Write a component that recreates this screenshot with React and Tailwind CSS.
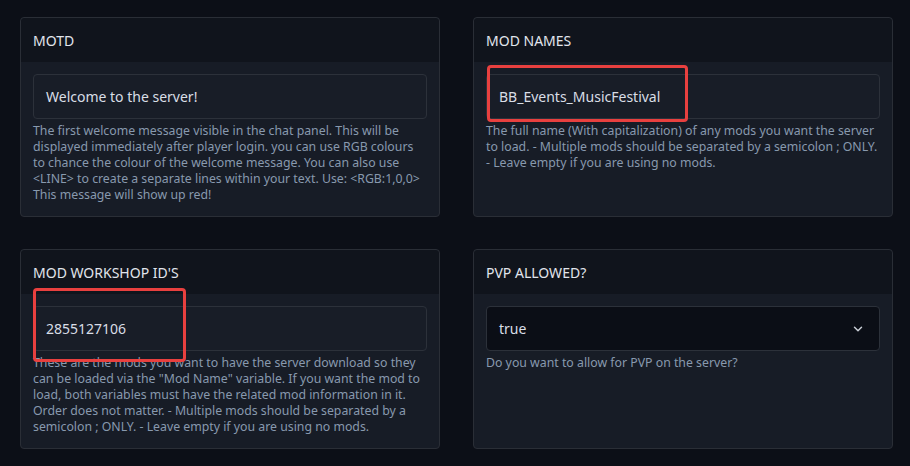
import { ChevronDown } from "lucide-react";

const font = { fontFamily: '"Noto Sans", "Open Sans", sans-serif' };

function Card({ title, children, highlight }) {
  return (
    <div className="relative h-[200px] rounded-[4px] border border-[#2a2e36] bg-[#171c26]">
      <div className="h-[44px] flex items-center px-[12px] bg-[#10141c] rounded-t-[4px] text-[14px] font-normal text-[#e1e5ec]">
        {title}
      </div>
      <div className="px-[12px] pt-[12px]">{children}</div>
      {highlight}
    </div>
  );
}

function TextField({ value }) {
  return (
    <div className="h-[45px] flex items-center px-[12px] rounded-[4px] border border-[#2c313a] bg-[#181d27] text-[14px] text-[#d9dee6]">
      {value}
    </div>
  );
}

function Help({ children }) {
  return <p className="mt-[4px] text-[12.3px] leading-[16px] text-[#8899ae]">{children}</p>;
}

export default function App() {
  return (
    <div className="min-h-screen w-[910px] bg-[#0c0f17] pt-[17px] pl-[20px] pr-[17px]" style={font}>
      <div className="grid grid-cols-2 gap-x-[33px] gap-y-[32px]">
        <Card title="MOTD">
          <TextField value="Welcome to the server!" />
          <Help>
            The first welcome message visible in the chat panel. This will be displayed immediately after player login. you can use RGB colours to chance the colour of the welcome message. You can also use &lt;LINE&gt; to create a separate lines within your text. Use: &lt;RGB:1,0,0&gt; This message will show up red!
          </Help>
        </Card>

        <Card
          title="MOD NAMES"
          highlight={<div className="absolute left-[13px] top-[47px] w-[201px] h-[57px] rounded-[4px] border-[3px] border-[#e8403f]" />}
        >
          <TextField value="BB_Events_MusicFestival" />
          <Help>
            The full name (With capitalization) of any mods you want the server to load. - Multiple mods should be separated by a semicolon ; ONLY. - Leave empty if you are using no mods.
          </Help>
        </Card>

        <Card
          title="MOD WORKSHOP ID'S"
          highlight={<div className="absolute left-[12px] top-[38px] w-[153px] h-[74px] rounded-[4px] border-[3px] border-[#e8403f]" />}
        >
          <TextField value="2855127106" />
          <Help>
            These are the mods you want to have the server download so they can be loaded via the "Mod Name" variable. If you want the mod to load, both variables must have the related mod information in it. Order does not matter. - Multiple mods should be separated by a semicolon ; ONLY. - Leave empty if you are using no mods.
          </Help>
        </Card>

        <Card title="PVP ALLOWED?">
          <div className="h-[45px] flex items-center justify-between px-[12px] rounded-[4px] border border-[#2c313a] bg-[#0b0e16] text-[14px] text-[#d9dee6]">
            <span>true</span>
            <ChevronDown size={14} strokeWidth={2.5} className="text-[#c9ced6] mr-[2px]" />
          </div>
          <Help>Do you want to allow for PVP on the server?</Help>
        </Card>
      </div>
    </div>
  );
}
